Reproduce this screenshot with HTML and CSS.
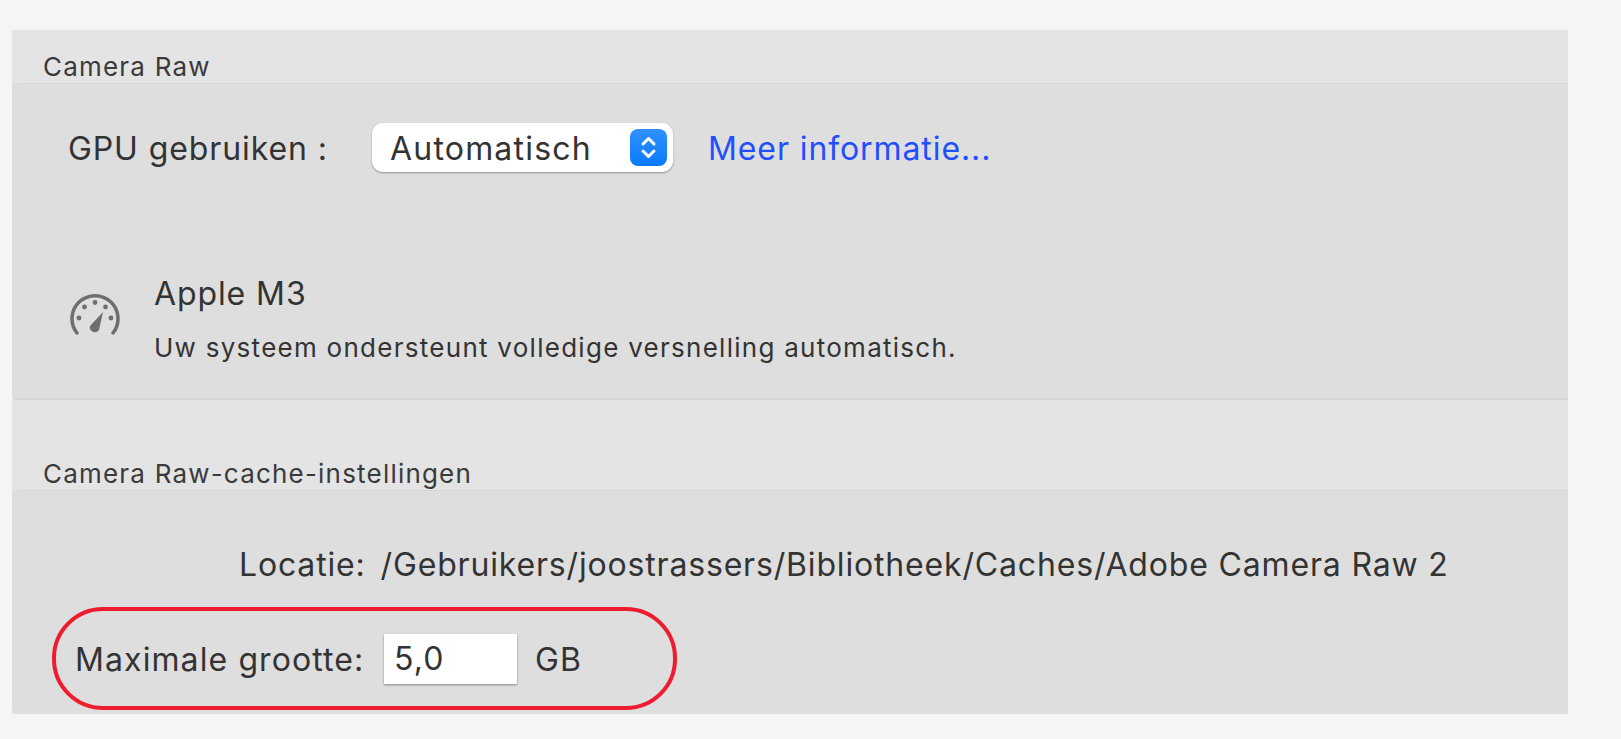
FILE: index.html
```html
<!DOCTYPE html>
<html lang="nl">
<head>
<meta charset="utf-8">
<title>Camera Raw</title>
<link rel="stylesheet" href="styles.css">
</head>
<body>
<main class="prefs">
  <h2 class="group-title">Camera Raw</h2>
  <section class="panel panel-gpu">
    <div class="gpu-row">
      <span class="gpu-label">GPU gebruiken :</span>
      <div class="select">
        <span class="select-value">Automatisch</span>
        <span class="select-btn">
          <svg viewBox="0 0 37 37" width="37" height="37" aria-hidden="true"><path d="M13 15l5.500-5.500L24 15M13 22l5.500 5.500L24 22" fill="none" stroke="#fff" stroke-width="3" stroke-linecap="round" stroke-linejoin="round"/></svg>
        </span>
      </div>
      <a class="more" href="#">Meer informatie...</a>
    </div>
    <div class="gpu-info">
      <svg class="gauge" viewBox="0 0 50 42" width="50" height="42" aria-hidden="true">
        <path d="M7 40A23 23 0 1 1 43 40" fill="none" stroke="#6e6e6e" stroke-width="3.500" stroke-linecap="round"/>
        <circle cx="9" cy="25" r="2.400" fill="#6e6e6e"/>
        <circle cx="14.500" cy="14" r="2.400" fill="#6e6e6e"/>
        <circle cx="25" cy="9.500" r="2.400" fill="#6e6e6e"/>
        <circle cx="35.500" cy="14" r="2.400" fill="#6e6e6e"/>
        <circle cx="41" cy="25" r="2.400" fill="#6e6e6e"/>
        <path d="M20 33L33 19L29 37A5 5 0 0 1 20 33Z" fill="#6e6e6e"/>
      </svg>
      <div class="gpu-text">
        <div class="gpu-name">Apple M3</div>
        <div class="gpu-desc">Uw systeem ondersteunt volledige versnelling automatisch.</div>
      </div>
    </div>
  </section>
  <h2 class="group-title group-title-second">Camera Raw-cache-instellingen</h2>
  <section class="panel panel-cache">
    <div class="location">
      <span class="location-label">Locatie:</span>
      <span class="location-path">/Gebruikers/joostrassers/Bibliotheek/Caches/Adobe Camera Raw 2</span>
    </div>
    <div class="size-row">
      <span class="size-label">Maximale grootte:</span>
      <span class="size-input">5,0</span>
      <span class="size-unit">GB</span>
    </div>
  </section>
  <div class="highlight"></div>
</main>
</body>
</html>
```
FILE: styles.css
```css
* { box-sizing: border-box; }
html, body { margin: 0; height: 100%; }
body {
  background: #f5f5f5;
  font-family: Inter, "Noto Sans", "Liberation Sans", sans-serif;
  color: #333;
  overflow: hidden;
}
.prefs {
  position: relative;
  margin: 30px 53px 0 12px;
  height: 684px;
  background: #e4e4e4;
  display: flex;
  flex-direction: column;
}
.group-title {
  margin: 0;
  padding-left: 31px;
  height: 53px;
  padding-top: 22px;
  font-size: 26px;
  line-height: 30px;
  font-weight: 400;
  letter-spacing: 1.200px;
  color: #3a3a3a;
  white-space: nowrap;
}
.group-title-second { height: 90px; padding-top: 59px; }
.panel {
  background: #dedede;
  border-top: 1px solid #d6d6d6;
  border-radius: 6px 0 0 6px;
}
.panel-gpu {
  height: 317px;
  border-bottom: 2px solid #d6d6d6;
  padding: 39px 0 0 56px;
}
.gpu-row {
  display: flex;
  align-items: center;
  height: 49px;
  font-size: 32px;
  letter-spacing: .9px;
}
.gpu-label { width: 304px; padding-top: 2px; }
.select {
  width: 301px;
  height: 49px;
  background: #fff;
  border-radius: 11px;
  box-shadow: 0 1px 2px rgba(0,0,0,.35);
  display: flex;
  align-items: center;
  justify-content: space-between;
  padding: 0 6px 0 18px;
}
.select-value { padding-top: 2px; letter-spacing: 1.200px; }
.select-btn {
  width: 37px;
  height: 37px;
  border-radius: 8px;
  background: linear-gradient(#2f92ff, #0a7aff);
  display: flex;
}
.more {
  margin-left: 35px;
  padding-top: 2px;
  color: #1f4fff;
  text-decoration: none;
}
.gpu-info { display: flex; margin-top: 102px; }
.gauge { margin: 19px 0 0 2px; flex: none; }
.gpu-text { margin-left: 34px; }
.gpu-name { font-size: 32px; line-height: 40px; letter-spacing: .9px; }
.gpu-desc { font-size: 26px; line-height: 34px; margin-top: 17px; letter-spacing: 1.270px; white-space: nowrap; }
.panel-cache {
  flex: 1;
  padding: 0 0 0 56px;
}
.location {
  display: flex;
  margin-top: 54px;
  padding-left: 171px;
  font-size: 32px;
  line-height: 40px;
  letter-spacing: .83px;
  gap: 15px;
  white-space: nowrap;
}
.size-row {
  display: flex;
  align-items: center;
  margin: 49px 0 0 7px;
  height: 50px;
  font-size: 32px;
  letter-spacing: 1.100px;
}
.size-label { width: 309px; white-space: nowrap; }
.size-input {
  width: 133px;
  height: 50px;
  background: #fff;
  padding-left: 10px;
  line-height: 50px;
  box-shadow: 0 1px 2px rgba(0,0,0,.4);
}
.size-unit { margin-left: 18px; }
.highlight {
  position: absolute;
  left: 40px;
  top: 577px;
  width: 625px;
  height: 103px;
  border: 4px solid #ee1c2e;
  border-radius: 51px;
}
```
